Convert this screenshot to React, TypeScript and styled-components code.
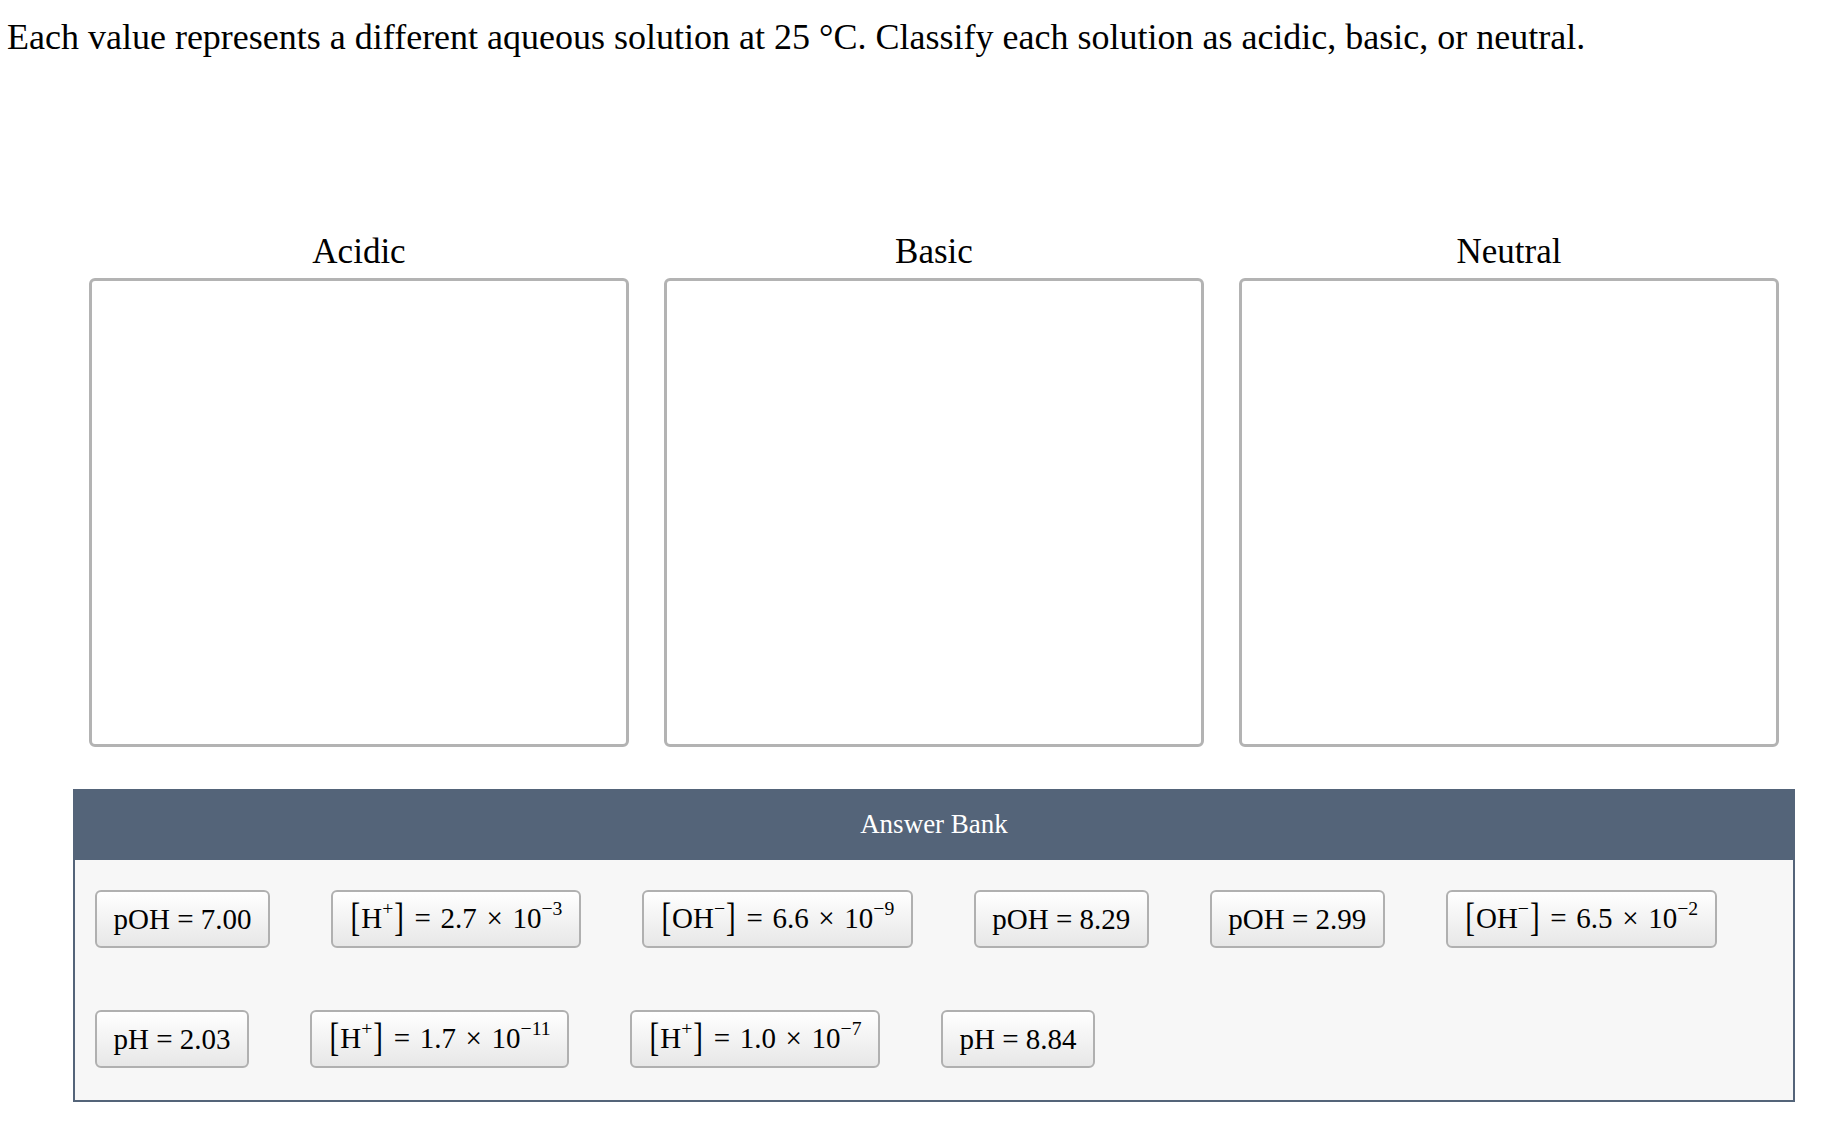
import React from 'react';
import styled, { createGlobalStyle } from 'styled-components';

const GlobalStyle = createGlobalStyle`
  html, body {
    margin: 0;
    padding: 0;
    background: #ffffff;
  }
  body {
    font-family: 'Liberation Serif', 'Times New Roman', serif;
    color: #000;
  }
`;

const Page = styled.div`
  padding: 0 8px;
`;

const Prompt = styled.div`
  font-size: 36px;
  line-height: 40px;
  padding-top: 17px;
  margin-left: -1px;
`;

const Board = styled.div`
  width: 1722px;
  margin-left: 65px;
  margin-top: 175px;
`;

const Columns = styled.div`
  display: grid;
  grid-template-columns: repeat(3, 1fr);
  column-gap: 35px;
  padding: 0 16px;
`;

const Column = styled.div`
  display: flex;
  flex-direction: column;
  align-items: stretch;
`;

const ColumnLabel = styled.div`
  font-size: 35px;
  line-height: 40px;
  text-align: center;
  margin-bottom: 6px;
`;

const DropZone = styled.div`
  height: 469px;
  box-sizing: border-box;
  border: 3px solid #b3b3b3;
  border-radius: 6px;
  background: #fff;
`;

const Bank = styled.div`
  margin-top: 42px;
  border: 2px solid #546479;
  border-top: none;
  background: #f7f7f7;
`;

const BankHeader = styled.div`
  background: #546479;
  color: #fff;
  height: 71px;
  display: flex;
  align-items: center;
  justify-content: center;
  font-size: 27px;
  margin: 0 -2px;
`;

const BankBody = styled.div`
  display: flex;
  flex-wrap: wrap;
  column-gap: 61px;
  row-gap: 62px;
  padding: 30px 20px 32px 20px;
`;

const Chip = styled.div`
  height: 58px;
  box-sizing: border-box;
  display: flex;
  align-items: center;
  padding: 0 16.5px;
  border: 2px solid #b0b0b0;
  border-radius: 6px;
  background: linear-gradient(#ffffff, #e7e7e7);
  font-size: 29px;
  white-space: nowrap;
`;

const ChipText = styled.span`
  display: inline-block;
  line-height: 34px;
`;

const Bracket = styled.span`
  display: inline-block;
  transform: scaleY(1.4);
  transform-origin: 50% 55%;
  margin: 0 1px;
`;

const Op = styled.span`
  margin: 0 2.4px;
`;

const Sup = styled.span`
  font-size: 0.68em;
  position: relative;
  top: -0.62em;
`;

type Ion = 'H' | 'OH';

const Conc = ({ ion, mant, exp }: { ion: Ion; mant: string; exp: string }) => (
  <ChipText>
    <Bracket>[</Bracket>
    {ion}
    <Sup>{ion === 'H' ? '+' : '−'}</Sup>
    <Bracket>]</Bracket>
    {' '}<Op>=</Op>{` ${mant} `}<Op>×</Op>{' 10'}
    <Sup>{exp}</Sup>
  </ChipText>
);

const columns = ['Acidic', 'Basic', 'Neutral'];

function App() {
  return (
    <Page>
      <GlobalStyle />
      <Prompt>
        Each value represents a different aqueous solution at 25 °C. Classify each solution as acidic, basic, or neutral.
      </Prompt>
      <Board>
        <Columns>
          {columns.map((c) => (
            <Column key={c}>
              <ColumnLabel>{c}</ColumnLabel>
              <DropZone />
            </Column>
          ))}
        </Columns>
        <Bank>
          <BankHeader>Answer Bank</BankHeader>
          <BankBody>
            <Chip><ChipText>pOH = 7.00</ChipText></Chip>
            <Chip><Conc ion="H" mant="2.7" exp="−3" /></Chip>
            <Chip><Conc ion="OH" mant="6.6" exp="−9" /></Chip>
            <Chip><ChipText>pOH = 8.29</ChipText></Chip>
            <Chip><ChipText>pOH = 2.99</ChipText></Chip>
            <Chip><Conc ion="OH" mant="6.5" exp="−2" /></Chip>
            <Chip><ChipText>pH = 2.03</ChipText></Chip>
            <Chip><Conc ion="H" mant="1.7" exp="−11" /></Chip>
            <Chip><Conc ion="H" mant="1.0" exp="−7" /></Chip>
            <Chip><ChipText>pH = 8.84</ChipText></Chip>
          </BankBody>
        </Bank>
      </Board>
    </Page>
  );
}

export default App;
